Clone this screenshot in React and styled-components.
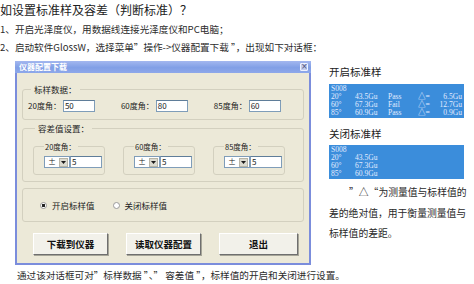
import React from "react";
import styled, { createGlobalStyle } from "styled-components";

const GlobalStyle = createGlobalStyle`
  body {
    margin: 0;
    background: #ffffff;
    font-family: "Noto Sans CJK SC", "Noto Sans", sans-serif;
    color: #2a2a2a;
  }
`;

const angles = ["20度角：", "60度角：", "85度角："];
const standardValues = ["50", "80", "60"];

const readings = [
  { deg: "20°", value: "43.5Gu", result: "Pass", diff: "6.5Gu" },
  { deg: "60°", value: "67.3Gu", result: "Fail", diff: "12.7Gu" },
  { deg: "85°", value: "60.9Gu", result: "Pass", diff: "0.9Gu" },
];

const App = () => {
  return (
    <Page>
      <GlobalStyle />
      <Heading>如设置标准样及容差（判断标准）？</Heading>
      <Line $top={5}>1、开启光泽度仪，用数据线连接光泽度仪和PC电脑；</Line>
      <Line $top={6}>2、启动软件GlossW，选择菜单”操作-&gt;仪器配置下载 ”，出现如下对话框：</Line>

      <Main>
        <Dialog>
          <TitleBar>
            <TitleText>仪器配置下载</TitleText>
            <CloseBox>×</CloseBox>
          </TitleBar>
          <DialogBody>
            <Group $pad="6px 6px 7px 5px">
              <Legend>标样数据：</Legend>
              <FieldRow>
                {angles.map((a, i) => (
                  <Field key={a}>
                    <Label>{a}</Label>
                    <TextBox $w={32}>{standardValues[i]}</TextBox>
                  </Field>
                ))}
              </FieldRow>
            </Group>

            <Group $pad="9px 8px 6px 9px" $top={3}>
              <Legend>容差值设置：</Legend>
              <SubRow>
                {angles.map((a) => (
                  <SubGroup key={a}>
                    <SmallLegend>{a}</SmallLegend>
                    <Combo>
                      <ComboValue>±</ComboValue>
                      <ComboArrow>
                        <svg width="5" height="3" viewBox="0 0 5 3">
                          <path d="M0 0h5L2.5 3z" fill="#1a1a1a" />
                        </svg>
                      </ComboArrow>
                    </Combo>
                    <TextBox $w={32}>5</TextBox>
                  </SubGroup>
                ))}
              </SubRow>
            </Group>

            <RadioGroup>
              <RadioItem>
                <Radio $checked />
                开启标样值
              </RadioItem>
              <RadioItem>
                <Radio />
                关闭标样值
              </RadioItem>
            </RadioGroup>

            <ButtonRow>
              <Button>下载到仪器</Button>
              <Button>读取仪器配置</Button>
              <Button $wide>退出</Button>
            </ButtonRow>
          </DialogBody>
        </Dialog>

        <Side>
          <SideTitle>开启标准样</SideTitle>
          <Readout>
            <div>S008</div>
            {readings.map((r) => (
              <ReadRow key={r.deg}>
                <span>{r.deg}</span>
                <span>{r.value}</span>
                <span>{r.result}</span>
                <span>△=</span>
                <Num>{r.diff}</Num>
              </ReadRow>
            ))}
          </Readout>

          <SideTitle $top={10}>关闭标准样</SideTitle>
          <Readout $top={5}>
            <div>S008</div>
            {readings.map((r) => (
              <ReadRow key={r.deg}>
                <span>{r.deg}</span>
                <span>{r.value}</span>
              </ReadRow>
            ))}
          </Readout>

          <Note>
            <Indent>”△“为测量值与标样值的</Indent>
            差的绝对值，用于衡量测量值与
            <br />
            标样值的差距。
          </Note>
        </Side>
      </Main>

      <Line $top={4} $left={17}>
        通过该对话框可对”标样数据 ”、” 容差值 ”，标样值的开启和关闭进行设置。
      </Line>
    </Page>
  );
};

export default App;

const Page = styled.div`
  width: 474px;
  height: 284px;
  overflow: hidden;
  padding-top: 2px;
  box-sizing: border-box;
`;

const Heading = styled.div`
  font-size: 12px;
  line-height: 16px;
  color: #222;
  white-space: nowrap;
`;

const Line = styled.div`
  margin-top: ${(p) => p.$top || 0}px;
  margin-left: ${(p) => p.$left || 0}px;
  font-size: 9.6px;
  line-height: 12px;
  color: #2c2c2c;
  white-space: nowrap;
`;

const Main = styled.div`
  display: flex;
  align-items: flex-start;
  margin-top: 8px;
`;

const Dialog = styled.div`
  margin-left: 15px;
  width: 296px;
  height: 204px;
  box-sizing: border-box;
  display: flex;
  flex-direction: column;
  border: 2px solid #7b8ddc;
  border-top: none;
  background: #ece9d8;
`;

const TitleBar = styled.div`
  height: 12px;
  flex-shrink: 0;
  margin: 0 -2px;
  display: flex;
  align-items: center;
  justify-content: space-between;
  padding: 0 3px 0 4px;
  background: linear-gradient(180deg, #a3b7ef 0%, #819fe6 55%, #8ea8ea 100%);
`;

const TitleText = styled.span`
  font-size: 8px;
  font-weight: 700;
  color: #ffffff;
  line-height: 10px;
`;

const CloseBox = styled.span`
  width: 8px;
  height: 8px;
  box-sizing: border-box;
  border: 1px solid #eef2ff;
  border-radius: 1px;
  background: #c3cdee;
  color: #4a4f78;
  font-size: 8px;
  line-height: 6px;
  text-align: center;
  font-family: "DejaVu Sans", sans-serif;
`;

const DialogBody = styled.div`
  flex: 1;
  display: flex;
  flex-direction: column;
  padding: 11px 5px 0 5px;
`;

const Group = styled.fieldset`
  margin: ${(p) => p.$top || 0}px 0 0;
  padding: ${(p) => p.$pad};
  border: 1px solid #d3d0bf;
  border-radius: 3px;
  min-width: 0;
`;

const Legend = styled.legend`
  margin-left: 3px;
  padding: 0 3px;
  font-size: 8.5px;
  line-height: 10px;
  color: #1f1f1f;
`;

const FieldRow = styled.div`
  display: flex;
  gap: 26px;
`;

const Field = styled.div`
  display: flex;
  align-items: center;
  gap: 2px;
`;

const Label = styled.span`
  font-size: 8px;
  line-height: 12px;
  color: #222;
`;

const TextBox = styled.div`
  width: ${(p) => p.$w}px;
  height: 12px;
  box-sizing: border-box;
  background: #ffffff;
  border: 1px solid #7f9db9;
  border-top-color: #5f7d99;
  font-size: 8px;
  line-height: 10px;
  padding-left: 1px;
  color: #222;
`;

const SubRow = styled.div`
  display: flex;
  gap: 18px;
  padding-left: 1px;
`;

const SubGroup = styled.fieldset`
  margin: 0;
  width: 72px;
  box-sizing: border-box;
  padding: 5px 0 6px 10px;
  border: 1px solid #d3d0bf;
  border-radius: 3px;
  display: flex;
  align-items: center;
  min-width: 0;
`;

const SmallLegend = styled.legend`
  margin-left: 0;
  padding: 0 2px 0 1px;
  font-size: 7.5px;
  line-height: 9px;
  color: #222;
`;

const Combo = styled.div`
  width: 26px;
  height: 12px;
  box-sizing: border-box;
  display: flex;
  align-items: center;
  justify-content: space-between;
  background: #ffffff;
  border: 1px solid #7f9db9;
  padding: 0 1px 0 3px;
`;

const ComboValue = styled.span`
  font-size: 8px;
  line-height: 10px;
  color: #222;
`;

const ComboArrow = styled.span`
  width: 9px;
  height: 9px;
  display: flex;
  align-items: center;
  justify-content: center;
  background: #dcdbd0;
  border: 1px solid #b7b5a6;
  box-sizing: border-box;
`;

const RadioGroup = styled.div`
  margin-top: 6px;
  height: 34px;
  flex-shrink: 0;
  box-sizing: border-box;
  display: flex;
  align-items: center;
  gap: 18px;
  padding: 0 0 0 17px;
  border: 1px solid #d3d0bf;
  border-radius: 3px;
`;

const RadioItem = styled.label`
  display: flex;
  align-items: center;
  gap: 5px;
  font-size: 8.5px;
  line-height: 10px;
  color: #222;
`;

const Radio = styled.span`
  width: 7px;
  height: 7px;
  box-sizing: border-box;
  border-radius: 50%;
  border: 1px solid #9a9a9a;
  background: ${(p) =>
    p.$checked
      ? "radial-gradient(circle, #222 0 1.4px, #ffffff 1.8px)"
      : "#ffffff"};
`;

const ButtonRow = styled.div`
  display: flex;
  gap: 18px;
  padding-left: 11px;
  margin-top: 11px;
`;

const Button = styled.div`
  width: ${(p) => (p.$wide ? 79 : 75)}px;
  height: 22px;
  box-sizing: border-box;
  display: flex;
  align-items: center;
  justify-content: center;
  background: #f2f1ea;
  border: 1px solid;
  border-color: #ffffff #6f6f6f #6f6f6f #ffffff;
  box-shadow: 1px 1px 0 #a6a598;
  font-size: 9.5px;
  font-weight: 700;
  color: #111;
`;

const Side = styled.div`
  margin-left: 18px;
  width: 142px;
  display: flex;
  flex-direction: column;
  padding-top: 5px;
`;

const SideTitle = styled.div`
  margin-top: ${(p) => p.$top || 0}px;
  font-size: 10.5px;
  line-height: 12px;
  color: #222;
`;

const Readout = styled.div`
  margin-top: ${(p) => p.$top || 6}px;
  width: 135px;
  height: 34px;
  box-sizing: border-box;
  padding: 1px 2px 0 2px;
  background: #3b8ddb;
  font-family: "Liberation Serif", "Noto Sans CJK SC", serif;
  font-size: 7.6px;
  line-height: 8px;
  color: #e3ecff;
`;

const ReadRow = styled.div`
  display: grid;
  grid-template-columns: 24px 33px 30px 14px 1fr;
`;

const Num = styled.span`
  text-align: right;
`;

const Note = styled.div`
  margin-top: 3px;
  font-size: 9.8px;
  line-height: 20.5px;
  color: #2a2a2a;
  white-space: nowrap;
`;

const Indent = styled.div`
  padding-left: 20px;
`;
